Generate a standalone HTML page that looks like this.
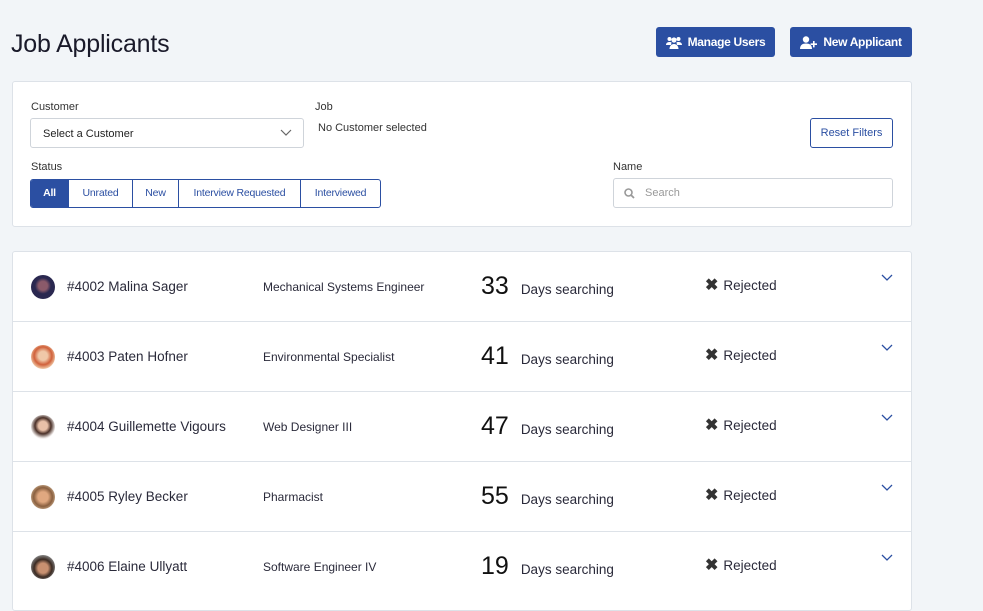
<!DOCTYPE html>
<html><head><meta charset="utf-8"><style>
*{box-sizing:border-box;margin:0;padding:0}
body{width:983px;height:600px;overflow:hidden;background:#f2f5f8;font-family:"Liberation Sans",sans-serif;color:#222;position:relative}
.abs{position:absolute}
h1{position:absolute;left:11px;top:30px;font-size:25px;font-weight:normal;color:#1a1a2a;letter-spacing:-0.2px}
.btn{position:absolute;top:27px;height:30px;background:#2b4fa2;color:#fff;border-radius:3px;font-size:12px;font-weight:bold;display:flex;align-items:center;justify-content:center;gap:6px;letter-spacing:-0.3px}
.card{position:absolute;left:12px;width:900px;background:#fff;border:1px solid #dde2e8;border-radius:3px}
.lbl{position:absolute;font-size:11px;color:#333}
.sel{position:absolute;left:30px;top:118px;width:274px;height:30px;border:1px solid #cfd4da;border-radius:3px;font-size:11px;padding:9px 12px;color:#222}
.seg{position:absolute;left:30px;top:179px;height:29px;display:flex;border:1px solid #2b4fa2;border-radius:3px;overflow:hidden}
.seg div{font-size:10.5px;color:#2b4fa2;text-align:center;line-height:27px;border-left:1px solid #2b4fa2;letter-spacing:-0.2px}
.seg div:first-child{border-left:none;background:#2b4fa2;color:#fff;font-weight:bold}
.row{position:absolute;left:0;width:898px;height:70px;border-top:1px solid #dde2e8}
.row:first-child{border-top:none}
.av{position:absolute;left:18px;top:23px;width:24px;height:24px;border-radius:50%}
.nm{position:absolute;left:54px;top:27px;font-size:13.5px;color:#2a2a3a}
.jb{position:absolute;left:250px;top:28px;font-size:12px;color:#2a2a3a}
.dy{position:absolute;left:468px;top:20px;display:flex;align-items:baseline}
.dy b{font-size:25px;font-weight:normal;color:#111;margin-right:12px}
.dy span{font-size:13.5px;color:#2a2a3a}
.rj{position:absolute;left:692px;top:23px;font-size:13.5px;color:#2a2a3a;display:flex;align-items:center;gap:5px}
.ch{position:absolute;left:868px;top:22px}
</style></head><body>
<h1>Job Applicants</h1>
<div class="btn" style="left:656px;width:119px"><svg width="16" height="13" viewBox="0 0 16 13" fill="#fff"><circle cx="3.5" cy="3" r="2"/><circle cx="12.5" cy="3" r="2"/><circle cx="8" cy="4" r="2.6"/><path d="M0 9c0-2 1.5-3 3.5-3s2 .5 2 .5L5 9z M16 9c0-2-1.5-3-3.5-3s-2 .5-2 .5L11 9z M3.5 13c0-3 2-5 4.5-5s4.5 2 4.5 5z"/></svg>Manage Users</div>
<div class="btn" style="left:790px;width:122px"><svg width="17" height="13" viewBox="0 0 17 13" fill="#fff"><circle cx="6" cy="3.5" r="3.2"/><path d="M0 13c0-4 2.5-5.5 6-5.5s6 1.5 6 5.5z"/><path d="M13 5h1.6v2.4H17V9h-2.4v2.4H13V9h-2.4V7.4H13z"/></svg>New Applicant</div>

<div class="card" style="top:81px;height:146px">
<div class="lbl" style="left:18px;top:19px">Customer</div>
<div class="lbl" style="left:302px;top:19px">Job</div>
<div class="lbl" style="left:305px;top:40px">No Customer selected</div>
<div class="lbl" style="left:18px;top:79px">Status</div>
<div class="lbl" style="left:600px;top:79px">Name</div>
<div class="abs" style="left:797px;top:36px;width:83px;height:30px;border:1px solid #2b4fa2;border-radius:3px;font-size:11px;color:#2b4fa2;text-align:center;line-height:28px">Reset Filters</div>
<div class="abs" style="left:600px;top:96px;width:280px;height:30px;border:1px solid #cfd4da;border-radius:3px;font-size:11px;color:#999;padding:8px 0 0 31px"><svg class="abs" style="left:10px;top:9px" width="11" height="11" viewBox="0 0 11 11"><circle cx="4.5" cy="4.5" r="3.5" fill="none" stroke="#999" stroke-width="1.6"/><path d="M7 7l3 3" stroke="#999" stroke-width="1.8"/></svg>Search</div>
</div>
<div class="sel">Select a Customer<svg class="abs" style="right:11px;top:10px" width="12" height="8" viewBox="0 0 12 8"><path d="M1 1l5 5 5-5" fill="none" stroke="#666" stroke-width="1.2"/></svg></div>
<div class="seg"><div style="width:37px">All</div><div style="width:64px">Unrated</div><div style="width:46px">New</div><div style="width:122px">Interview Requested</div><div style="width:80px">Interviewed</div></div>

<div class="card" style="top:251px;height:360px">
<div class="row" style="top:0"><div class="av" style="background:radial-gradient(circle at 50% 45%,#8a5a6a 0 25%,#2a2850 45%)"></div><div class="nm">#4002 Malina Sager</div><div class="jb">Mechanical Systems Engineer</div><div class="dy"><b>33</b><span>Days searching</span></div><div class="rj"><span style="font-size:16px;font-weight:bold;color:#333">✖</span>Rejected</div><svg class="ch" width="12" height="8" viewBox="0 0 12 8"><path d="M1 1l5 5 5-5" fill="none" stroke="#2b4fa2" stroke-width="1.3"/></svg></div>
<div class="row" style="top:69px"><div class="av" style="background:radial-gradient(circle at 50% 45%,#f0c8a8 0 25%,#d0603a 50%,#f3d2b0 75%)"></div><div class="nm">#4003 Paten Hofner</div><div class="jb">Environmental Specialist</div><div class="dy"><b>41</b><span>Days searching</span></div><div class="rj"><span style="font-size:16px;font-weight:bold;color:#333">✖</span>Rejected</div><svg class="ch" width="12" height="8" viewBox="0 0 12 8"><path d="M1 1l5 5 5-5" fill="none" stroke="#2b4fa2" stroke-width="1.3"/></svg></div>
<div class="row" style="top:139px"><div class="av" style="background:radial-gradient(circle at 50% 45%,#e8c0a8 0 25%,#4a3028 45%,#f4f0ee 70%)"></div><div class="nm">#4004 Guillemette Vigours</div><div class="jb">Web Designer III</div><div class="dy"><b>47</b><span>Days searching</span></div><div class="rj"><span style="font-size:16px;font-weight:bold;color:#333">✖</span>Rejected</div><svg class="ch" width="12" height="8" viewBox="0 0 12 8"><path d="M1 1l5 5 5-5" fill="none" stroke="#2b4fa2" stroke-width="1.3"/></svg></div>
<div class="row" style="top:209px"><div class="av" style="background:radial-gradient(circle at 50% 50%,#e0a880 0 30%,#8a6040 55%,#c0a080 75%)"></div><div class="nm">#4005 Ryley Becker</div><div class="jb">Pharmacist</div><div class="dy"><b>55</b><span>Days searching</span></div><div class="rj"><span style="font-size:16px;font-weight:bold;color:#333">✖</span>Rejected</div><svg class="ch" width="12" height="8" viewBox="0 0 12 8"><path d="M1 1l5 5 5-5" fill="none" stroke="#2b4fa2" stroke-width="1.3"/></svg></div>
<div class="row" style="top:279px"><div class="av" style="background:radial-gradient(circle at 50% 55%,#c89070 0 28%,#3a2a22 50%,#888 75%)"></div><div class="nm">#4006 Elaine Ullyatt</div><div class="jb">Software Engineer IV</div><div class="dy"><b>19</b><span>Days searching</span></div><div class="rj"><span style="font-size:16px;font-weight:bold;color:#333">✖</span>Rejected</div><svg class="ch" width="12" height="8" viewBox="0 0 12 8"><path d="M1 1l5 5 5-5" fill="none" stroke="#2b4fa2" stroke-width="1.3"/></svg></div>
</div>
</body></html>
